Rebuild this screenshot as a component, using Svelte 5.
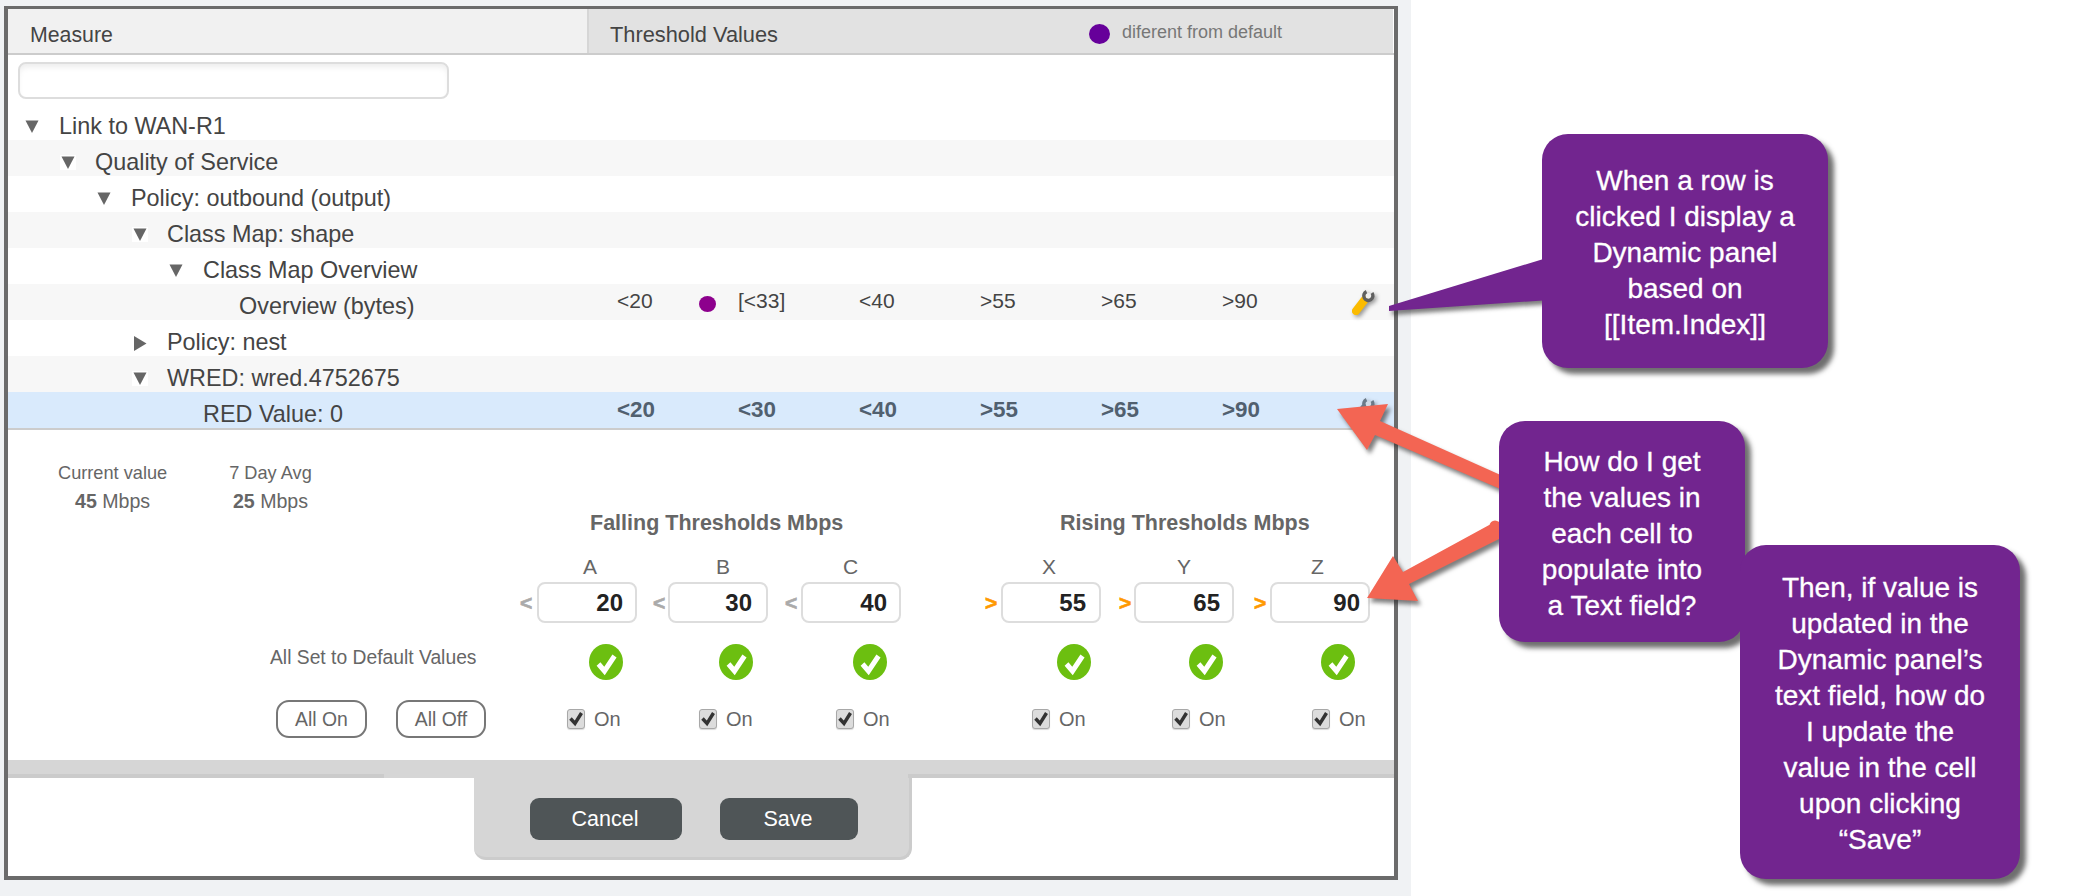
<script>
	const rows = [
		{ name: 'Link to WAN-R1', depth: 0, arrow: 'down' },
		{ name: 'Quality of Service', depth: 1, arrow: 'down' },
		{ name: 'Policy: outbound (output)', depth: 2, arrow: 'down' },
		{ name: 'Class Map: shape', depth: 3, arrow: 'down' },
		{ name: 'Class Map Overview', depth: 4, arrow: 'down' },
		{ name: 'Overview (bytes)', depth: 5, values: ['<20', '[<33]', '<40', '>55', '>65', '>90'], changed: 1 },
		{ name: 'Policy: nest', depth: 3, arrow: 'right' },
		{ name: 'WRED: wred.4752675', depth: 3, arrow: 'down' },
		{ name: 'RED Value: 0', depth: 4, values: ['<20', '<30', '<40', '>55', '>65', '>90'], selected: true }
	];

	// offsets are measured from the start of each field's column
	const fields = [
		{ label: 'A', value: 20, sign: '<', labelAt: 63, inputAt: 5, pad: 12, checkAt: 69, boxAt: 47 },
		{ label: 'B', value: 30, sign: '<', labelAt: 63, inputAt: 3, pad: 14, checkAt: 66, boxAt: 46 },
		{ label: 'C', value: 40, sign: '<', labelAt: 58, inputAt: 4, pad: 12, checkAt: 68, boxAt: 51 },
		{ label: 'X', value: 55, sign: '>', labelAt: 57, inputAt: 4, pad: 13, checkAt: 72, boxAt: 47 },
		{ label: 'Y', value: 65, sign: '>', labelAt: 58, inputAt: 3, pad: 12, checkAt: 70, boxAt: 53 },
		{ label: 'Z', value: 90, sign: '>', labelAt: 57, inputAt: 4, pad: 8, checkAt: 67, boxAt: 58 }
	];

	const callouts = [
		{ cls: 'c1', lines: ['When a row is', 'clicked I display a', 'Dynamic panel', 'based on', '[[Item.Index]]'] },
		{ cls: 'c2', lines: ['How do I get', 'the values in', 'each cell to', 'populate into', 'a Text field?'] },
		{ cls: 'c3', lines: ['Then, if value is', 'updated in the', 'Dynamic panel’s', 'text field, how do', 'I update the', 'value in the cell', 'upon clicking', '“Save”'] }
	];
</script>

{#snippet wrench(muted)}
	<svg class="wrench" class:muted width="26" height="28" viewBox="0 0 26 28">
		<path class="handle" d="M4 24 L12.5 13" />
		<circle class="eye" cx="16.5" cy="9" r="3" />
		<path class="head" d="M14.5 4.6 A4.6 4.6 0 1 0 20 6" />
	</svg>
{/snippet}

<div class="canvas">
	<div class="page">
		<div class="frame">
			<div class="head-row">
				<div class="head-measure">Measure</div>
				<div class="head-values">
					<span class="head-title">Threshold Values</span>
					<i class="legend-dot"></i>
					<span class="legend-text">diferent from default</span>
				</div>
			</div>

			<div class="search-row">
				<input class="search" type="text" />
			</div>

			<div class="tree">
				{#each rows as row, i}
					<div class="row" class:odd={i % 2 === 1} class:selected={row.selected}>
						<div class="name" style="padding-left: {16 + row.depth * 36}px">
							<span class="arrow-slot">
								{#if row.arrow === 'down'}
									<svg width="16" height="15" viewBox="0 0 16 15"><path d="M1.5 1.5 H14.5 L8 14 Z" /></svg>
								{:else if row.arrow === 'right'}
									<svg width="16" height="17" viewBox="0 0 16 17"><path d="M2 1 L14.5 8.5 L2 16 Z" /></svg>
								{/if}
							</span>
							{row.name}
						</div>
						{#if row.values}
							{#each row.values as value, v}
								<div class="value">
									{#if row.changed === v}<i class="changed-dot"></i>{/if}
									{value}
								</div>
							{/each}
							<div class="tool">{@render wrench(row.selected)}</div>
						{/if}
					</div>
				{/each}
			</div>

			<div class="detail">
				<div class="stats">
					<div class="stat first">Current value<div class="amount"><b>45</b> Mbps</div></div>
					<div class="stat">7 Day Avg<div class="amount"><b>25</b> Mbps</div></div>
				</div>
				<div class="group falling">Falling Thresholds Mbps</div>
				<div class="group rising">Rising Thresholds Mbps</div>

				{#each fields as f, i}
					<div class="letter" style="grid-column: {i + 2}; padding-left: {f.labelAt}px">{f.label}</div>
					<div class="field" style="grid-column: {i + 2}">
						<span class="sign" class:up={f.sign === '>'}>{f.sign}</span>
						<input class="num" style="margin-left: {f.inputAt}px; padding-right: {f.pad}px" type="text" value={f.value} />
					</div>
					<div class="ok" style="grid-column: {i + 2}; padding-left: {f.checkAt}px">
						<svg width="34" height="36" viewBox="0 0 34 36">
							<ellipse cx="17" cy="18" rx="17" ry="18" fill="#6cbf10" />
							<path d="M9.5 20 L15.5 27 L25.5 12" fill="none" stroke="#fff" stroke-width="5" />
						</svg>
					</div>
					<div class="on" style="grid-column: {i + 2}; padding-left: {f.boxAt}px">
						<span class="box">
							<svg width="18" height="20" viewBox="0 0 18 20"><path d="M3.5 9.5 L8 14.5 L14.5 4" fill="none" stroke="#333" stroke-width="3.4" /></svg>
						</span>
						On
					</div>
				{/each}

				<div class="defaults">All Set to Default Values</div>
				<div class="toggles">
					<button class="toggle on-btn">All On</button>
					<button class="toggle">All Off</button>
				</div>
			</div>

			<div class="band"><i class="strip left"></i><i class="strip right"></i></div>

			<div class="footer">
				<div class="tab">
					<button class="action cancel">Cancel</button>
					<button class="action save">Save</button>
				</div>
			</div>
		</div>
	</div>

	<!-- annotations drawn over the mockup -->
	<svg class="overlay" width="2074" height="896" viewBox="0 0 2074 896">
		<polygon fill="#72258f" points="1389,306 1550,257 1550,300 1389,311" />
		<polygon fill="#f36553" points="1337,409 1388,404 1380,421 1505,477 1505,491 1375,435 1367,450" />
		<polygon fill="#f36553" points="1367,598 1393,556 1403,572 1491,524 1505,520 1505,536 1409,584 1418,601" />
		<circle fill="#f36553" cx="1495" cy="526" r="5.5" />
	</svg>

	{#each callouts as c}
		<div class="callout {c.cls}">
			{#each c.lines as line}<div>{line}</div>{/each}
		</div>
	{/each}
</div>

<style>
	:global(body) {
		margin: 0;
		background: #fff;
		font-family: "Liberation Sans", Arial, sans-serif;
	}

	.canvas {
		position: relative;
		width: 2074px;
		height: 896px;
		overflow: hidden;
		background: #fff;
		color: #444;
		font-family: "Liberation Sans", Arial, sans-serif;
	}

	.page {
		width: 1411px;
		height: 896px;
		box-sizing: border-box;
		padding: 6px 0 0 4px;
		background: #f0f2f4;
	}

	.frame {
		width: 1394px;
		height: 874px;
		box-sizing: border-box;
		display: flex;
		flex-direction: column;
		border: 4px solid #6b6b6b;
		border-top-width: 3px;
		background: #fff;
	}

	.head-row {
		display: flex;
		height: 46px;
		box-sizing: border-box;
		border-bottom: 2px solid #ccc;
		font-size: 21.3px;
	}

	.head-measure {
		width: 581px;
		padding-left: 22px;
		box-sizing: border-box;
		line-height: 52px;
		background: #f1f1f1;
		border-right: 2px solid #d6d6d6;
	}

	.head-values {
		flex: 1;
		display: flex;
		align-items: center;
		box-sizing: border-box;
		padding: 6px 0 0 21px;
		background: #e2e2e2;
		margin-right: 1px;
	}

	.head-title {
		margin-top: 2px;
		font-size: 21.8px;
	}

	.legend-dot {
		width: 21px;
		height: 20px;
		margin-left: 311px;
		border-radius: 50%;
		background: #66009a;
	}

	.legend-text {
		margin-left: 12px;
		margin-top: -4px;
		font-size: 18px;
		color: #777;
	}

	.search-row {
		height: 49px;
		padding: 7px 0 0 10px;
		box-sizing: border-box;
	}

	.search {
		display: block;
		width: 431px;
		height: 37px;
		box-sizing: border-box;
		border: 2px solid #ddd;
		border-radius: 8px;
		outline: none;
		background: #fff;
		box-shadow: inset 0 5px 6px -2px rgba(0, 0, 0, 0.08);
	}

	.row {
		display: flex;
		height: 36px;
		box-sizing: border-box;
	}

	.row.odd {
		background: #f7f7f7;
	}

	.row.selected {
		background: #d9eafc;
		border-bottom: 2px solid #ccc;
		height: 38px;
	}

	.name {
		width: 609px;
		height: 36px;
		box-sizing: border-box;
		display: flex;
		font-size: 23.4px;
		line-height: 36px;
		padding-top: 4px;
		white-space: nowrap;
	}

	.arrow-slot {
		width: 35px;
		flex: none;
		padding-top: 11px;
		line-height: 0;
	}

	.arrow-slot svg {
		display: block;
		background: #fff;
	}

	.arrow-slot path {
		fill: #666;
	}

	.value {
		position: relative;
		width: 121px;
		font-size: 21px;
		line-height: 34px;
		white-space: nowrap;
	}

	.selected .value {
		font-size: 22.4px;
		font-weight: 700;
		color: #51606f;
		line-height: 36px;
	}

	.changed-dot {
		position: absolute;
		left: -39px;
		top: 12px;
		width: 17px;
		height: 16px;
		border-radius: 50%;
		background: #8d008d;
	}

	.tool {
		margin-left: 9px;
		padding-top: 3px;
	}

	.wrench {
		display: block;
		overflow: visible;
		filter: drop-shadow(2px 2px 2px rgba(0, 0, 0, 0.4));
	}

	.wrench path {
		fill: none;
	}

	.wrench .handle {
		stroke: #fbbb00;
		stroke-width: 8;
		stroke-linecap: round;
	}

	.wrench .eye {
		fill: #eee;
	}

	.wrench .head {
		stroke: #5f5f5f;
		stroke-width: 3.4;
	}

	.wrench.muted .handle,
	.wrench.muted .head {
		stroke: #6b7a88;
	}

	.wrench.muted .eye {
		fill: #cfd9e4;
	}

	.detail {
		display: grid;
		grid-template-columns: 512px 133px 132px 200px 134px 135px 140px;
		grid-template-rows: 122px 30px 41px 57px 58px 22px;
	}

	.stats {
		grid-column: 1;
		grid-row: 1;
		display: flex;
		align-self: start;
		margin-top: 30px;
		font-size: 18.2px;
		line-height: 27.7px;
		color: #666;
		text-align: center;
	}

	.stat {
		margin-left: 62px;
		white-space: nowrap;
	}

	.stat.first {
		margin-left: 50px;
	}

	.amount {
		font-size: 19.6px;
	}

	.group {
		grid-row: 1;
		align-self: end;
		margin-bottom: 14px;
		font-size: 21.5px;
		font-weight: 700;
		line-height: 30px;
		color: #666;
		white-space: nowrap;
	}

	.falling {
		grid-column: 2 / 5;
		padding-left: 70px;
	}

	.rising {
		grid-column: 5 / 8;
		padding-left: 75px;
	}

	.letter {
		grid-row: 2;
		font-size: 21px;
		line-height: 30px;
		color: #666;
	}

	.field {
		grid-row: 3;
		display: flex;
		align-items: center;
	}

	.sign {
		width: 12px;
		font-size: 21px;
		font-weight: 700;
		color: #aaa;
		-webkit-text-stroke: 0.7px currentColor;
	}

	.sign.up {
		color: #f90;
	}

	.num {
		width: 100px;
		height: 41px;
		box-sizing: border-box;
		border: 2px solid #ddd;
		border-radius: 8px;
		outline: none;
		padding: 0;
		background: #fff;
		font: 700 24px "Liberation Sans", Arial, sans-serif;
		color: #222;
		text-align: right;
	}

	.ok {
		grid-row: 4;
		align-self: end;
		line-height: 0;
	}

	.on {
		grid-row: 5;
		align-self: end;
		display: flex;
		align-items: center;
		margin-bottom: 8px;
		font-size: 20px;
		line-height: 22px;
		color: #666;
	}

	.box {
		width: 18px;
		height: 20px;
		margin-right: 9px;
		box-sizing: border-box;
		display: flex;
		align-items: center;
		justify-content: center;
		border: 1px solid #a8a8a8;
		border-radius: 3px;
		background: #dcdcdc;
		box-shadow: 0 1px 1px rgba(0, 0, 0, 0.15);
	}

	.box svg {
		flex: none;
	}

	.defaults {
		grid-column: 1;
		grid-row: 4;
		align-self: end;
		margin-bottom: 10px;
		padding-left: 262px;
		font-size: 19.3px;
		line-height: 24px;
		color: #666;
		white-space: nowrap;
	}

	.toggles {
		grid-column: 1;
		grid-row: 5;
		align-self: end;
		display: flex;
		gap: 29px;
		padding-left: 268px;
	}

	.toggle {
		width: 90px;
		height: 38px;
		padding: 0;
		box-sizing: border-box;
		border: 2px solid #777;
		border-radius: 13px;
		background: #fff;
		font: 19.4px "Liberation Sans", Arial, sans-serif;
		color: #666;
	}

	.toggle.on-btn {
		width: 91px;
	}

	.band {
		height: 18px;
		flex: none;
		display: flex;
		justify-content: space-between;
		align-items: flex-end;
		background: #d6d6d6;
	}

	.strip {
		height: 4px;
		background: #cbcbcb;
	}

	.strip.left {
		width: 376px;
	}

	.strip.right {
		width: 486px;
	}

	.footer {
		flex: 1;
		padding-left: 466px;
	}

	.tab {
		width: 438px;
		height: 82px;
		box-sizing: border-box;
		display: flex;
		padding: 20px 0 0 56px;
		gap: 38px;
		background: #d6d6d6;
		border-radius: 0 0 12px 12px;
		border-right: 3px solid #ccc;
		border-bottom: 3px solid #ccc;
	}

	.action {
		height: 42px;
		padding: 0 2px 0 0;
		border: none;
		border-radius: 9px;
		background: #4f5557;
		color: #fff;
		font: 21.5px "Liberation Sans", Arial, sans-serif;
	}

	.cancel {
		width: 152px;
	}

	.save {
		width: 138px;
	}

	.overlay {
		position: absolute;
		left: 0;
		top: 0;
		filter: drop-shadow(3px 4px 2px rgba(40, 40, 40, 0.6));
	}

	.callout {
		position: absolute;
		box-sizing: border-box;
		border-radius: 26px;
		background: #72258f;
		box-shadow: 6px 6px 5px rgba(50, 50, 50, 0.7);
		color: #fff;
		font-size: 28px;
		line-height: 36px;
		text-align: center;
		white-space: nowrap;
		-webkit-text-stroke: 0.3px #fff;
	}

	.c1 {
		left: 1542px;
		top: 134px;
		width: 286px;
		height: 234px;
		padding-top: 29px;
	}

	.c2 {
		left: 1499px;
		top: 421px;
		width: 246px;
		height: 221px;
		padding-top: 23px;
	}

	.c3 {
		left: 1740px;
		top: 545px;
		width: 280px;
		height: 334px;
		padding-top: 25px;
	}
</style>
